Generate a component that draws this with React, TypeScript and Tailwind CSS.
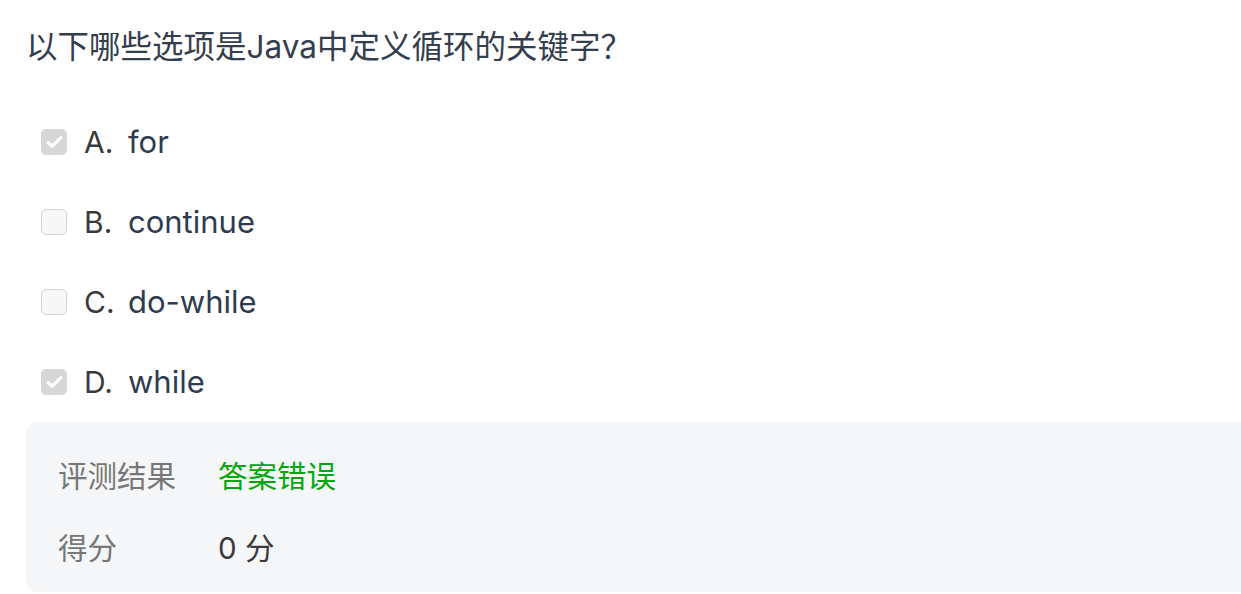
import { Check } from "lucide-react";

const OPTIONS = [
  { key: "A", text: "for", checked: true },
  { key: "B", text: "continue", checked: false },
  { key: "C", text: "do-while", checked: false },
  { key: "D", text: "while", checked: true },
];

const FONT = { fontFamily: 'Inter, "Noto Sans CJK SC", sans-serif' };

function Box({ checked }: { checked: boolean }) {
  return (
    <span
      className={`flex h-[26px] w-[26px] shrink-0 items-center justify-center rounded-[5px] border ${
        checked ? "border-[#d6d6d6] bg-[#d6d6d6]" : "border-[#d4d4d4] bg-[#f7f7f7]"
      }`}
    >
      {checked && <Check className="h-[19px] w-[19px] text-white" strokeWidth={4} />}
    </span>
  );
}

export default function App() {
  return (
    <div className="h-[594px] w-[1241px] overflow-hidden bg-white" style={FONT}>
      <div className="pl-[26px] pt-[27px]">
        <h1 className="text-[31.5px] leading-[40px] text-[#353e4d]">以下哪些选项是Java中定义循环的关键字？</h1>

        <div className="mt-[55px] flex flex-col gap-[40px] pl-[15px]">
          {OPTIONS.map((o) => (
            <label key={o.key} className="flex h-[40px] items-center">
              <Box checked={o.checked} />
              <span className="ml-[17px] w-[44px] text-[30px] text-[#3a3a3a]">{o.key}.</span>
              <span className="text-[31px] text-[#2f3b4f]">{o.text}</span>
            </label>
          ))}
        </div>

        <div className="mt-[20px] w-[1260px] rounded-[12px] bg-[#f5f6f8] pb-[24px] pl-[32px] pt-[34px]">
          <div className="flex h-[40px] items-center text-[29.5px]">
            <span className="w-[160px] text-[#777777]">评测结果</span>
            <span className="text-[#00a60e]">答案错误</span>
          </div>
          <div className="mt-[32px] flex h-[40px] items-center text-[29.5px]">
            <span className="w-[160px] text-[#777777]">得分</span>
            <span className="text-[#3a3a3a]">0 分</span>
          </div>
        </div>
      </div>
    </div>
  );
}
